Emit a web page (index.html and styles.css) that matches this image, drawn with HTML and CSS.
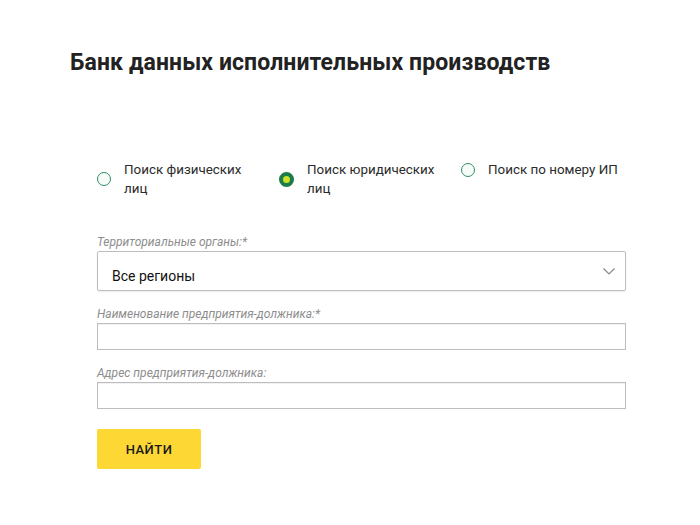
FILE: index.html
```html
<!DOCTYPE html>
<html lang="ru">
<head>
<meta charset="utf-8">
<link rel="stylesheet" href="styles.css">
</head>
<body>
<div class="page">
  <h1 class="title">Банк данных исполнительных производств</h1>
  <form class="form">
    <div class="radios">
      <label class="radio">
        <span class="dot"></span>
        <span class="radio-text">Поиск физических лиц</span>
      </label>
      <label class="radio">
        <span class="dot dot-on"></span>
        <span class="radio-text">Поиск юридических лиц</span>
      </label>
      <label class="radio">
        <span class="dot"></span>
        <span class="radio-text">Поиск по номеру ИП</span>
      </label>
    </div>
    <div class="field">
      <div class="label">Территориальные органы:*</div>
      <div class="select">
        <span class="select-value">Все регионы</span>
        <svg class="chev" width="12" height="7" viewBox="0 0 12 7"><path d="M0.5 0.5 L6 6 L11.5 0.5" fill="none" stroke="#888" stroke-width="1.2"/></svg>
      </div>
    </div>
    <div class="field">
      <div class="label">Наименование предприятия-должника:*</div>
      <div class="input"></div>
    </div>
    <div class="field">
      <div class="label">Адрес предприятия-должника:</div>
      <div class="input"></div>
    </div>
    <div class="btn">НАЙТИ</div>
  </form>
</div>
</body>
</html>
```
FILE: styles.css
```css
html, body { margin: 0; padding: 0; background: #fff; }
body { font-family: Roboto, "Noto Sans", sans-serif; color: #1e1e1e; }
.page { padding: 48px 0 0 70px; }
.title { margin: 0; font-size: 23px; font-weight: 700; line-height: 30px; color: #222; letter-spacing: 0.1px; }
.form { margin: 82px 0 0 27px; width: 529px; }
.radios { display: flex; align-items: flex-start; }
.radio { flex: none; display: flex; align-items: center; width: 182px; font-size: 13.4px; line-height: 19px; color: #2b2b2b; }
.radio-text { width: 136px; }
.dot { flex: none; width: 12px; height: 12px; border: 1.7px solid #2f8f63; border-radius: 50%; margin: 0 13px 0 0; box-sizing: content-box; background: #f7fbf9; }
.dot-on { background: #cde02a; border: 4px solid #1b7b49; width: 7px; height: 7px; }
.radios + .field { margin-top: 36px; }
.label { font-size: 12px; font-style: italic; color: #8d8d8d; line-height: 16px; margin-bottom: 1px; }
.select { height: 38px; border: 1px solid #bdbdbd; border-radius: 2px; display: flex; align-items: center; justify-content: space-between; padding: 0 10px 0 14px; box-shadow: 0 1px 2px rgba(0,0,0,0.08); margin-bottom: 15px; }
.select-value { font-size: 14px; color: #111; padding-top: 9px; }
.input { height: 25px; border: 1px solid #bdbdbd; box-shadow: inset 0 1px 1px rgba(0,0,0,0.06); margin-bottom: 15px; }
.btn { display: inline-flex; align-items: center; justify-content: center; width: 104px; height: 40px; margin-top: 5px; background: #fdd835; border-radius: 2px; font-size: 13px; font-weight: 500; letter-spacing: 0.5px; color: #1a1a1a; }
```
